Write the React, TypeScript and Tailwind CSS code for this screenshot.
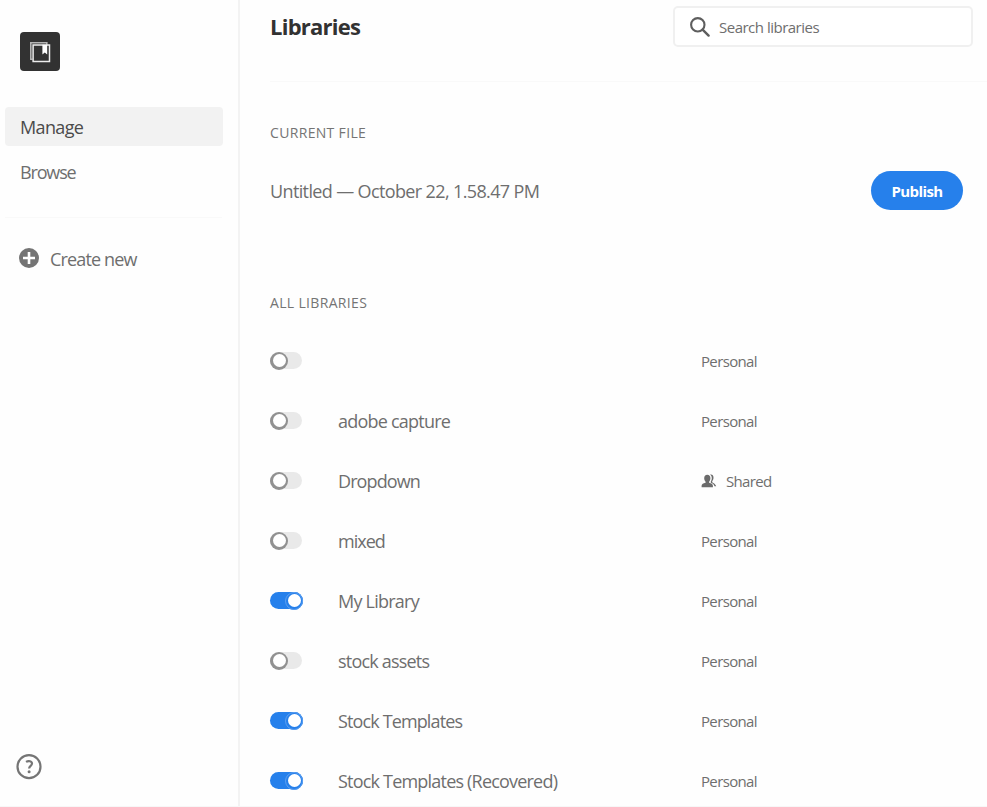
import { useState } from "react"

type Library = {
    id: number
    name: string
    shared?: boolean
    enabled: boolean
    tracking?: string
}

const initialLibraries: Library[] = [
    { id: 1, name: "", enabled: false },
    { id: 2, name: "adobe capture", enabled: false, tracking: "tracking-[-0.78px]" },
    { id: 3, name: "Dropdown", shared: true, enabled: false, tracking: "tracking-[-0.9px]" },
    { id: 4, name: "mixed", enabled: false, tracking: "tracking-[-1px]" },
    { id: 5, name: "My Library", enabled: true, tracking: "tracking-[-0.76px]" },
    { id: 6, name: "stock assets", enabled: false, tracking: "tracking-[-0.8px]" },
    { id: 7, name: "Stock Templates", enabled: true, tracking: "tracking-[-0.87px]" },
    { id: 8, name: "Stock Templates (Recovered)", enabled: true, tracking: "tracking-[-0.8px]" },
]

const navItems = [
    { name: "Manage", tracking: "tracking-[-0.65px]" },
    { name: "Browse", tracking: "tracking-[-1.15px]" },
]

const LibraryIcon = () => (
    <svg width="22" height="22" viewBox="0 0 22 22" fill="none">
        <path d="M3.5 18.2H1.8V1.8h16v2" stroke="#b4b4b4" strokeWidth="1.6" />
        <rect x="4.1" y="4" width="16.4" height="16.5" stroke="#ececec" strokeWidth="1.5" />
        <path d="M13.4 3.8h4.8v9.6l-2.4-2-2.4 2z" fill="#fff" />
    </svg>
)

const PlusIcon = () => (
    <svg width="20" height="20" viewBox="0 0 20 20">
        <circle cx="10" cy="10" r="10" fill="#747474" />
        <path d="M10 4v12M4 10h12" stroke="#fff" strokeWidth="2.6" />
    </svg>
)

const SearchIcon = () => (
    <svg width="20" height="20" viewBox="0 0 20 20" fill="none" stroke="#5e5e5e">
        <circle cx="7.8" cy="7.8" r="6.7" strokeWidth="2.1" />
        <path d="M12.6 12.6l6 6" strokeWidth="2.4" strokeLinecap="round" />
    </svg>
)

const HelpIcon = () => (
    <svg width="26" height="26" viewBox="0 0 26 26" fill="none">
        <circle cx="13" cy="12.7" r="11.5" stroke="#757575" strokeWidth="2.2" />
        <path d="M10 7.9c2.6-1.5 6-.8 6 1.7 0 2.2-2.9 2.4-2.9 5" stroke="#757575" strokeWidth="2.2" />
        <circle cx="13.1" cy="17.8" r="1.5" fill="#757575" />
    </svg>
)

const SharedIcon = () => (
    <svg width="16" height="14" viewBox="0 0 16 14" fill="#6b6b6b">
        <path d="M6.3.7c2 0 3.1 1.4 3.1 3.5 0 1.5-.6 2.8-1.3 3.500v1.100c2.200.5 3.800 1.300 3.800 3v1.500H.6v-1.500c0-1.700 1.700-2.500 4-3V7.700C3.800 7 3.200 5.700 3.200 4.200 3.200 2.100 4.300.7 6.300.7z" />
        <path d="M9 .5c2.600-.5 3.700 1.300 3.500 3.600-.1 1.400-.6 2.500-1.300 3.200v1c1.500.8 3.400 2.200 4 3.900h-1.700c-.5-1.600-1.800-2.700-3.700-3.400V7.500c.6-.9 1-2 1-3.300C10.800 2.500 10.200 1.200 9 .5z" />
    </svg>
)

const Toggle = ({ on, label, onClick }: { on: boolean; label: string; onClick: () => void }) => (
    <button
        role="switch"
        aria-checked={on}
        aria-label={label || "Unnamed library"}
        onClick={onClick}
        className={`flex h-[17px] shrink-0 items-start rounded-full ${on ? "w-[33px] justify-end bg-[#2680eb]" : "w-8 bg-[#e9e9e9]"}`}
    >
        <span
            className={`flex size-[18px] shrink-0 items-center justify-center rounded-full ${on ? "bg-[#2680eb] outline-1 -outline-offset-1 outline-[#5c9ff0]" : "bg-[#919191]"}`}
        >
            <span className="size-[13px] rounded-full bg-white" />
        </span>
    </button>
)

export default function App() {
    const [libraries, setLibraries] = useState(initialLibraries)
    const [page, setPage] = useState("Manage")

    const toggle = (id: number) => {
        setLibraries(libraries.map((l) => (l.id === id ? { ...l, enabled: !l.enabled } : l)))
    }

    return (
        <div className="flex h-[807px] w-[987px] overflow-hidden border-b border-[#f7f7f7] bg-[#fefefe] font-['Open_Sans','Noto_Sans',sans-serif] text-[#6e6e6e]">
            <aside className="flex w-60 shrink-0 flex-col border-r-2 border-[#f3f3f3] pt-8 pb-[26px]">
                <div className="ml-5 flex h-[39px] w-10 items-center justify-center rounded-[4px] bg-[#323232]">
                    <LibraryIcon />
                </div>
                <nav className="mt-9 mr-[15px] ml-[5px] flex flex-col gap-1.5 text-[18px]">
                    {navItems.map((item) => (
                        <button
                            key={item.name}
                            onClick={() => setPage(item.name)}
                            className={`h-[39px] rounded-[4px] px-[15px] pt-0.5 text-left ${item.tracking} ${page === item.name ? "bg-[#f2f2f2] text-[#4b4b4b]" : ""}`}
                        >
                            {item.name}
                        </button>
                    ))}
                </nav>
                <div className="mt-[26px] mr-4 ml-[5px] h-px shrink-0 bg-[#f9f9f9]" />
                <button className="mt-[26px] ml-[19px] flex h-[28px] items-center gap-[11px] text-[18px] tracking-[-0.84px]">
                    <PlusIcon />
                    <span className="pt-0.5">Create new</span>
                </button>
                <button aria-label="Help" className="mt-auto ml-4 w-fit">
                    <HelpIcon />
                </button>
            </aside>

            <main className="flex flex-1 flex-col pl-[30px]">
                <header className="flex h-[82px] shrink-0 items-start justify-between border-b border-[#f9f9f9] pt-1.5 pr-3.5">
                    <h1 className="pt-[5px] text-[22px] leading-[30px] font-bold tracking-[-0.75px] text-[#323232]">Libraries</h1>
                    <label className="flex h-[41px] w-[300px] items-center gap-[9px] rounded-[5px] border-2 border-[#f0f0f0] bg-white pl-[15px]">
                        <SearchIcon />
                        <input
                            placeholder="Search libraries"
                            className="w-[220px] bg-transparent pt-0.5 text-[15px] tracking-[-0.5px] outline-none placeholder:text-[#6e6e6e]"
                        />
                    </label>
                </header>

                <section className="shrink-0 pt-[41px]">
                    <h2 className="text-[14px] leading-5 tracking-[0.33px] text-[#747474]">CURRENT FILE</h2>
                    <div className="mt-[28px] flex h-[39px] items-center justify-between pr-6">
                        <div className="pt-0.5 text-[18px] tracking-[-0.63px]">Untitled — October 22, 1.58.47 PM</div>
                        <button className="h-[39px] w-[92px] rounded-full bg-[#2680eb] pt-0.5 text-[15px] font-bold tracking-[-0.6px] text-white">
                            Publish
                        </button>
                    </div>
                </section>

                <section className="shrink-0 pt-[83px]">
                    <h2 className="text-[14px] leading-5 tracking-[0.33px] text-[#747474]">ALL LIBRARIES</h2>
                    <div className="mt-[18px]">
                        {libraries.map((library) => (
                            <div key={library.id} className="flex h-[60px] items-center">
                                <div className="flex w-[68px] pb-0.5">
                                    <Toggle on={library.enabled} label={library.name} onClick={() => toggle(library.id)} />
                                </div>
                                <div className={`w-[363px] text-[18px] ${library.tracking ?? ""}`}>{library.name}</div>
                                <div className="flex items-center gap-[9px] text-[15px] tracking-[-0.65px]">
                                    {library.shared && <SharedIcon />}
                                    <span className="pt-px">{library.shared ? "Shared" : "Personal"}</span>
                                </div>
                            </div>
                        ))}
                    </div>
                </section>
            </main>
        </div>
    )
}
